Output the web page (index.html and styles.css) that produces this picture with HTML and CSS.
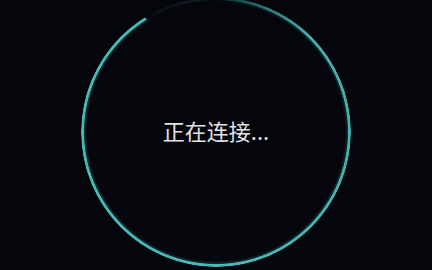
FILE: index.html
```html
<!DOCTYPE html>
<html lang="zh-CN">
<head>
<meta charset="utf-8">
<title>正在连接</title>
<link rel="stylesheet" href="styles.css">
</head>
<body>
<main class="stage">
  <div class="loader">
    <div class="ring-glow"></div>
    <div class="ring"></div>
    <p class="status">正在连接...</p>
  </div>
</main>
</body>
</html>
```

FILE: styles.css
```css
* { box-sizing: border-box; }
html, body {
  margin: 0;
  padding: 0;
  width: 432px;
  height: 270px;
  overflow: hidden;
  background: #04060c;
}
.stage {
  width: 432px;
  height: 270px;
  display: flex;
  justify-content: center;
  align-items: flex-start;
}
.loader {
  position: relative;
  width: 270px;
  height: 270px;
  margin-top: -3px;
  display: flex;
  align-items: center;
  justify-content: center;
}
.ring, .ring-glow {
  position: absolute;
  inset: 0;
  border-radius: 50%;
  background: conic-gradient(from -31deg,
    rgba(66, 178, 178, 0) 0deg,
    rgba(66, 178, 178, 0.08) 6deg,
    rgba(66, 178, 178, 0.12) 30deg,
    rgba(66, 178, 178, 0.55) 50deg,
    rgba(70, 182, 182, 0.95) 75deg,
    rgba(72, 184, 184, 1) 200deg,
    rgba(74, 186, 184, 1) 359deg,
    rgba(66, 178, 178, 0) 359.5deg);
}
.ring {
  -webkit-mask: radial-gradient(circle closest-side, transparent 131.6px, #000 132.4px, #000 134.6px, transparent 135.2px);
  mask: radial-gradient(circle closest-side, transparent 131.6px, #000 132.4px, #000 134.6px, transparent 135.2px);
}
.ring-glow {
  opacity: 0.25;
  filter: blur(2px);
  -webkit-mask: radial-gradient(circle closest-side, transparent 129px, #000 132px, #000 135px, transparent 138px);
  mask: radial-gradient(circle closest-side, transparent 129px, #000 132px, #000 135px, transparent 138px);
}
.status {
  position: relative;
  margin: 0 0 5px 0;
  font-family: "Noto Sans CJK SC", "Noto Sans", sans-serif;
  font-size: 22px;
  line-height: 1;
  color: #e4e4e6;
  letter-spacing: 0;
}
```
